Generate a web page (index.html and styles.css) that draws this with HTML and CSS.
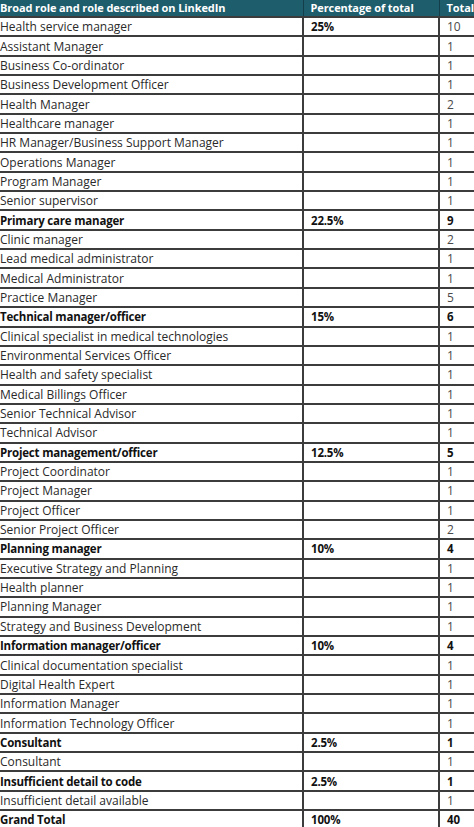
FILE: index.html
```html
<!DOCTYPE html>
<html>
<head>
<meta charset="utf-8">
<link rel="stylesheet" href="styles.css">
</head>
<body>
<table class="roles">
<colgroup><col class="c1"><col class="c2"><col class="c3"></colgroup>
<thead>
<tr><th>Broad role and role described on LinkedIn</th><th>Percentage of total</th><th>Total</th></tr>
</thead>
<tbody>
<tr class="grp"><td>Health service manager</td><td class="pct">25%</td><td class="num">10</td></tr>
<tr><td>Assistant Manager</td><td></td><td class="num">1</td></tr>
<tr><td>Business Co-ordinator</td><td></td><td class="num">1</td></tr>
<tr><td>Business Development Officer</td><td></td><td class="num">1</td></tr>
<tr><td>Health Manager</td><td></td><td class="num">2</td></tr>
<tr><td>Healthcare manager</td><td></td><td class="num">1</td></tr>
<tr><td>HR Manager/Business Support Manager</td><td></td><td class="num">1</td></tr>
<tr><td>Operations Manager</td><td></td><td class="num">1</td></tr>
<tr><td>Program Manager</td><td></td><td class="num">1</td></tr>
<tr><td>Senior supervisor</td><td></td><td class="num">1</td></tr>
<tr class="bold"><td>Primary care manager</td><td>22.5%</td><td>9</td></tr>
<tr><td>Clinic manager</td><td></td><td class="num">2</td></tr>
<tr><td>Lead medical administrator</td><td></td><td class="num">1</td></tr>
<tr><td>Medical Administrator</td><td></td><td class="num">1</td></tr>
<tr><td>Practice Manager</td><td></td><td class="num">5</td></tr>
<tr class="bold"><td>Technical manager/officer</td><td>15%</td><td>6</td></tr>
<tr><td>Clinical specialist in medical technologies</td><td></td><td class="num">1</td></tr>
<tr><td>Environmental Services Officer</td><td></td><td class="num">1</td></tr>
<tr><td>Health and safety specialist</td><td></td><td class="num">1</td></tr>
<tr><td>Medical Billings Officer</td><td></td><td class="num">1</td></tr>
<tr><td>Senior Technical Advisor</td><td></td><td class="num">1</td></tr>
<tr><td>Technical Advisor</td><td></td><td class="num">1</td></tr>
<tr class="bold"><td>Project management/officer</td><td>12.5%</td><td>5</td></tr>
<tr><td>Project Coordinator</td><td></td><td class="num">1</td></tr>
<tr><td>Project Manager</td><td></td><td class="num">1</td></tr>
<tr><td>Project Officer</td><td></td><td class="num">1</td></tr>
<tr><td>Senior Project Officer</td><td></td><td class="num">2</td></tr>
<tr class="bold"><td>Planning manager</td><td>10%</td><td>4</td></tr>
<tr><td>Executive Strategy and Planning</td><td></td><td class="num">1</td></tr>
<tr><td>Health planner</td><td></td><td class="num">1</td></tr>
<tr><td>Planning Manager</td><td></td><td class="num">1</td></tr>
<tr><td>Strategy and Business Development</td><td></td><td class="num">1</td></tr>
<tr class="bold"><td>Information manager/officer</td><td>10%</td><td>4</td></tr>
<tr><td>Clinical documentation specialist</td><td></td><td class="num">1</td></tr>
<tr><td>Digital Health Expert</td><td></td><td class="num">1</td></tr>
<tr><td>Information Manager</td><td></td><td class="num">1</td></tr>
<tr><td>Information Technology Officer</td><td></td><td class="num">1</td></tr>
<tr class="bold"><td>Consultant</td><td>2.5%</td><td>1</td></tr>
<tr><td>Consultant</td><td></td><td class="num">1</td></tr>
<tr class="bold"><td>Insufficient detail to code</td><td>2.5%</td><td>1</td></tr>
<tr><td>Insufficient detail available</td><td></td><td class="num">1</td></tr>
<tr class="bold"><td>Grand Total</td><td>100%</td><td>40</td></tr>
</tbody>
</table>
</body>
</html>
```
FILE: styles.css
```css
html, body {
  margin: 0;
  padding: 0;
  background: #ffffff;
  overflow: hidden;
}
body {
  width: 474px;
  height: 827px;
}
.roles {
  border-collapse: collapse;
  table-layout: fixed;
  width: 500px;
  font-family: "Open Sans", "DejaVu Sans", sans-serif;
  font-size: 12px;
  color: #2a2a2a;
}
.c1 { width: 303px; }
.c2 { width: 136px; }
.c3 { width: 61px; }
.roles th {
  background: #1e5d6c;
  color: #ffffff;
  font-weight: 700;
  font-size: 11px;
  letter-spacing: -0.1px;
  text-align: left;
  height: 16px;
  padding: 0 0 0 7px;
  border-left: 1px solid #143f4a;
  line-height: 16px;
  white-space: nowrap;
}
.roles th:first-child {
  padding-left: 0;
  border-left: none;
}
.roles td {
  height: 17.35px;
  padding: 0 0 0 7px;
  line-height: 17px;
  border-top: 2px solid #3c3c3c;
  border-left: 2px solid #3c3c3c;
  white-space: nowrap;
  overflow: hidden;
}
.roles td:first-child {
  padding-left: 0;
  border-left: none;
}
.roles td.num {
  color: #4a4a4a;
}
.roles tr.bold td,
.roles tr.grp td.pct {
  font-weight: 700;
  font-size: 11.5px;
  letter-spacing: -0.2px;
  color: #111111;
}
```
